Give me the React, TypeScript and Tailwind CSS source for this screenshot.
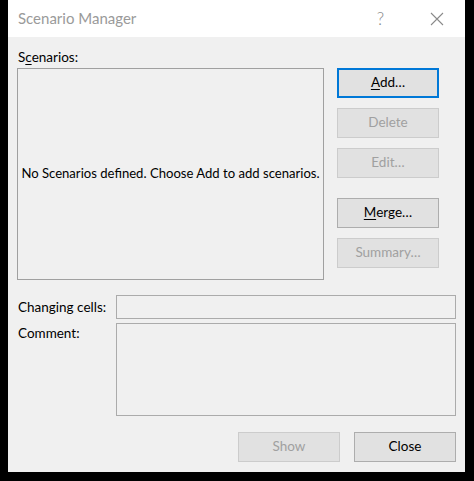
import React from "react";

const font = { fontFamily: 'Lato, "Noto Sans", Arial, sans-serif' };

function Btn({
    children,
    disabled,
    focused,
    className = "",
}: {
    children: React.ReactNode;
    disabled?: boolean;
    focused?: boolean;
    className?: string;
}) {
    const border = focused
        ? "border-2 border-[#0078d7]"
        : disabled
        ? "border border-[#cccccc]"
        : "border border-[#adadad]";
    return (
        <button
            className={`flex h-[30px] w-[102px] shrink-0 items-center justify-center whitespace-nowrap bg-[#e1e1e1] text-[13.5px] leading-none ${border} ${
                disabled ? "text-[#a0a0a0]" : "text-black"
            } ${className}`}
        >
            {children}
        </button>
    );
}

export default function App() {
    return (
        <div className="h-[481px] w-[474px] bg-black pl-[8px]" style={font}>
            <div className="flex h-[472px] w-[457px] flex-col bg-[#f0f0f0]">
                {/* Title bar */}
                <div className="flex h-[37px] shrink-0 items-center bg-white pl-[10px]">
                    <span className="text-[15px] text-[#9a9a9a]">Scenario Manager</span>
                    <span className="ml-auto mr-[46px] text-[17px] font-light text-[#8a8a8a]">?</span>
                    <svg width="14" height="14" viewBox="0 0 14 14" className="mr-[21px]">
                        <path d="M1 1 L13 13 M13 1 L1 13" stroke="#8a8a8a" strokeWidth="1.1" fill="none" />
                    </svg>
                </div>

                <div className="flex flex-col px-[9px] pt-[9px]">
                    <div className="h-[22px] whitespace-nowrap pl-[1px] text-[13.5px] leading-[22px] text-black">
                        S<u className="underline-offset-2">c</u>enarios:
                    </div>

                    <div className="flex">
                        <div className="flex h-[212px] w-[307px] shrink-0 items-center justify-center whitespace-nowrap border border-[#a0a0a0] text-[13.1px] text-black">
                            No Scenarios defined. Choose Add to add scenarios.
                        </div>
                        <div className="ml-[13px] flex flex-col">
                            <Btn focused>
                                <span>
                                    <u className="underline-offset-2">A</u>dd…
                                </span>
                            </Btn>
                            <Btn disabled className="mt-[10px]">
                                Delete
                            </Btn>
                            <Btn disabled className="mt-[10px]">
                                Edit…
                            </Btn>
                            <Btn className="mt-[20px]">
                                <span>
                                    <u className="underline-offset-2">M</u>erge…
                                </span>
                            </Btn>
                            <Btn disabled className="mt-[10px]">
                                Summary…
                            </Btn>
                        </div>
                    </div>

                    <div className="mt-[15px] flex items-center">
                        <span className="w-[99px] shrink-0 whitespace-nowrap pl-[1px] text-[13.5px] text-black">Changing cells:</span>
                        <div className="h-[24px] w-[340px] shrink-0 border border-[#ababab]" />
                    </div>
                    <div className="mt-[4px] flex">
                        <span className="w-[99px] shrink-0 whitespace-nowrap pl-[1px] text-[13.5px] leading-[20px] text-black">Comment:</span>
                        <div className="h-[93px] w-[340px] shrink-0 border border-[#ababab]" />
                    </div>

                    <div className="mt-[16px] flex justify-end gap-[14px]">
                        <Btn disabled className="border-[#c4c4c4]">
                            Show
                        </Btn>
                        <Btn>Close</Btn>
                    </div>
                </div>
            </div>
        </div>
    );
}
